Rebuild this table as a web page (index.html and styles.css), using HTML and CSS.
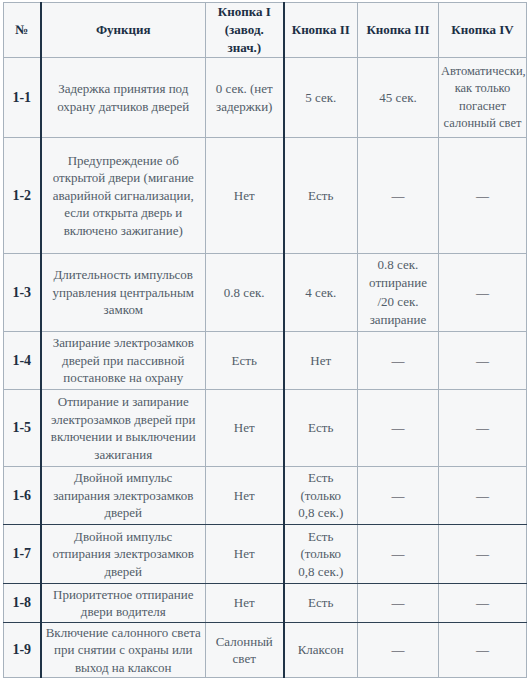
FILE: index.html
```html
<!DOCTYPE html>
<html lang="ru">
<head>
<meta charset="utf-8">
<title>Функции</title>
<link rel="stylesheet" href="styles.css">
</head>
<body>
<table class="tbl">
  <colgroup>
    <col class="c-num"><col class="c-fn"><col class="c-b1"><col class="c-b2"><col class="c-b3"><col class="c-b4">
  </colgroup>
  <thead>
    <tr class="r-h">
      <th class="dk">№</th>
      <th>Функция</th>
      <th class="dk">Кнопка I (завод. знач.)</th>
      <th>Кнопка II</th>
      <th>Кнопка III</th>
      <th>Кнопка IV</th>
    </tr>
  </thead>
  <tbody>
    <tr class="r1">
      <td class="num dk">1-1</td>
      <td>Задержка принятия под охрану датчиков дверей</td>
      <td class="dk">0 сек. (нет задержки)</td>
      <td>5 сек.</td>
      <td>45 сек.</td>
      <td class="narrow">Автоматически, как только погаснет салонный свет</td>
    </tr>
    <tr class="r2">
      <td class="num dk">1-2</td>
      <td>Предупреждение об открытой двери (мигание аварийной сигнализации, если открыта дверь и включено зажигание)</td>
      <td class="dk">Нет</td>
      <td>Есть</td>
      <td class="dash">—</td>
      <td class="dash">—</td>
    </tr>
    <tr class="r3">
      <td class="num dk">1-3</td>
      <td>Длительность импульсов управления центральным замком</td>
      <td class="dk">0.8 сек.</td>
      <td>4 сек.</td>
      <td class="tight">0.8 сек. отпирание /20 сек. запирание</td>
      <td class="dash">—</td>
    </tr>
    <tr class="r4">
      <td class="num dk">1-4</td>
      <td>Запирание электрозамков дверей при пассивной постановке на охрану</td>
      <td class="dk">Есть</td>
      <td>Нет</td>
      <td class="dash">—</td>
      <td class="dash">—</td>
    </tr>
    <tr class="r5">
      <td class="num dk">1-5</td>
      <td>Отпирание и запирание электрозамков дверей при включении и выключении зажигания</td>
      <td class="dk">Нет</td>
      <td>Есть</td>
      <td class="dash">—</td>
      <td class="dash">—</td>
    </tr>
    <tr class="r6 dkb">
      <td class="num dk">1-6</td>
      <td>Двойной импульс запирания электрозамков дверей</td>
      <td class="dk">Нет</td>
      <td class="wrap">Есть (только 0,8&nbsp;сек.)</td>
      <td class="dash">—</td>
      <td class="dash">—</td>
    </tr>
    <tr class="r7 dkb">
      <td class="num dk">1-7</td>
      <td>Двойной импульс отпирания электрозамков дверей</td>
      <td class="dk">Нет</td>
      <td class="wrap">Есть (только 0,8&nbsp;сек.)</td>
      <td class="dash">—</td>
      <td class="dash">—</td>
    </tr>
    <tr class="r8 dkb">
      <td class="num dk">1-8</td>
      <td>Приоритетное отпирание двери водителя</td>
      <td class="dk">Нет</td>
      <td>Есть</td>
      <td class="dash">—</td>
      <td class="dash">—</td>
    </tr>
    <tr class="r9">
      <td class="num dk">1-9</td>
      <td>Включение салонного света при снятии с охраны или выход на клаксон</td>
      <td class="dk">Салонный свет</td>
      <td>Клаксон</td>
      <td class="dash">—</td>
      <td class="dash">—</td>
    </tr>
  </tbody>
</table>
</body>
</html>
```

FILE: styles.css
```css
html, body {
  margin: 0;
  padding: 0;
  background: #ffffff;
}

body {
  padding: 2px 0 0 3px;
  font-family: "Liberation Serif", "Times New Roman", serif;
}

.tbl {
  border-collapse: collapse;
  table-layout: fixed;
  width: 523px;
  background: #f6f7f8;
  font-family: "Liberation Serif", "Times New Roman", serif;
}

.c-num { width: 37px; }
.c-fn { width: 165px; }
.c-b1 { width: 78px; }
.c-b2 { width: 74px; }
.c-b3 { width: 81px; }
.c-b4 { width: 88px; }

.tbl th,
.tbl td {
  font-family: "Liberation Serif", "Times New Roman", serif;
  border: 1px solid #a7b2bd;
  padding: 0 4px;
  text-align: center;
  vertical-align: middle;
}

.tbl th {
  font-weight: bold;
  font-size: 13px;
  line-height: 18px;
  color: #1b2f45;
}

.tbl td {
  font-size: 13px;
  line-height: 17.5px;
  color: #525d69;
}

.tbl th.dk,
.tbl td.dk {
  border-right: 2px solid #1f3347;
}

.tbl td.num {
  font-weight: bold;
  font-size: 14px;
  color: #1e2f41;
  padding: 0 2px;
}

.tbl td.dash {
  color: #1d2a37;
  font-size: 13px;
}

.tbl td.narrow {
  font-size: 12.5px;
  padding: 0 2px;
}

.tbl td.tight {
  line-height: 18.5px;
}

.tbl td.wrap {
  padding: 0 10px;
}

.tbl tr.dkb td {
  border-bottom-color: #2e4154;
}

.r-h { height: 55px; }
.r1 { height: 80px; }
.r2 { height: 116px; }
.r3 { height: 78px; }
.r4 { height: 58px; }
.r5 { height: 77px; }
.r6 { height: 58px; }
.r7 { height: 59px; }
.r8 { height: 39px; }
.r9 { height: 55px; }
```
